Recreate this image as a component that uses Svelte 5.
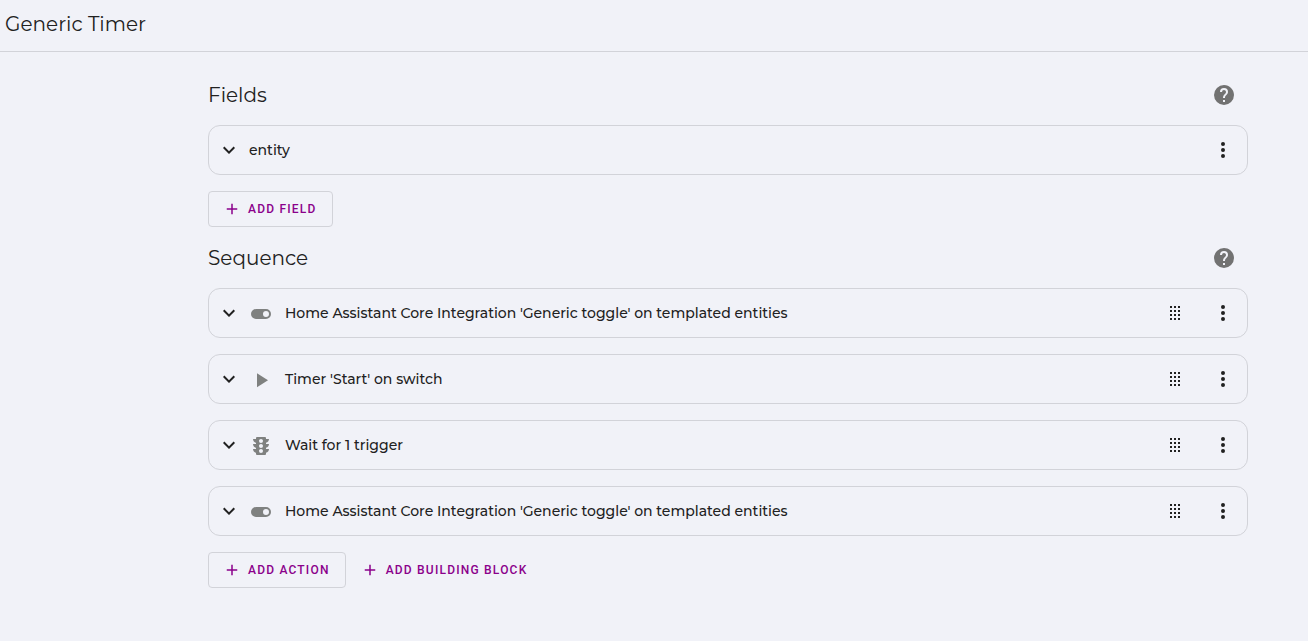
<script lang="ts">
  type Action = { id: number; icon: string; label: string };

  const icons: Record<string, string> = {
    chevron: 'M7.41,8.58L12,13.17L16.59,8.58L18,10L12,16L6,10L7.41,8.58Z',
    dots: 'M12,16A2,2 0 0,1 14,18A2,2 0 0,1 12,20A2,2 0 0,1 10,18A2,2 0 0,1 12,16M12,10A2,2 0 0,1 14,12A2,2 0 0,1 12,14A2,2 0 0,1 10,12A2,2 0 0,1 12,10M12,4A2,2 0 0,1 14,6A2,2 0 0,1 12,8A2,2 0 0,1 10,6A2,2 0 0,1 12,4Z',
    drag: 'M7,19V17H9V19H7M11,19V17H13V19H11M15,19V17H17V19H15M7,15V13H9V15H7M11,15V13H13V15H11M15,15V13H17V15H15M7,11V9H9V11H7M11,11V9H13V11H11M15,11V9H17V11H15M7,7V5H9V7H7M11,7V5H13V7H11M15,7V5H17V7H15Z',
    plus: 'M19,13H13V19H11V13H5V11H11V5H13V11H19V13Z',
    help: 'M15.07,11.25L14.17,12.17C13.45,12.89 13,13.5 13,15H11V14.5C11,13.39 11.45,12.39 12.17,11.67L13.41,10.41C13.78,10.05 14,9.55 14,9C14,7.89 13.1,7 12,7A2,2 0 0,0 10,9H8A4,4 0 0,1 12,5A4,4 0 0,1 16,9C16,9.88 15.64,10.67 15.07,11.25M13,19H11V17H13M12,2A10,10 0 0,0 2,12A10,10 0 0,0 12,22A10,10 0 0,0 22,12C22,6.47 17.5,2 12,2Z',
    toggle: 'M17,7H7A5,5 0 0,0 2,12A5,5 0 0,0 7,17H17A5,5 0 0,0 22,12A5,5 0 0,0 17,7M17,15A3,3 0 0,1 14,12A3,3 0 0,1 17,9A3,3 0 0,1 20,12A3,3 0 0,1 17,15Z',
    play: 'M8,5.14V19.14L19,12.14L8,5.14Z',
    traffic: 'M12,9A2,2 0 0,1 10,7C10,5.89 10.9,5 12,5C13.11,5 14,5.89 14,7A2,2 0 0,1 12,9M12,14A2,2 0 0,1 10,12C10,10.89 10.9,10 12,10C13.11,10 14,10.89 14,12A2,2 0 0,1 12,14M12,19A2,2 0 0,1 10,17C10,15.89 10.9,15 12,15C13.11,15 14,15.89 14,17A2,2 0 0,1 12,19M20,10H17V8.86C18.72,8.41 20,6.86 20,5H17V4A1,1 0 0,0 16,3H8A1,1 0 0,0 7,4V5H4C4,6.86 5.28,8.41 7,8.86V10H4C4,11.86 5.28,13.41 7,13.86V15H4C4,16.86 5.28,18.41 7,18.86V20A1,1 0 0,0 8,21H16A1,1 0 0,0 17,20V18.86C18.72,18.41 20,16.86 20,15H17V13.86C18.72,13.41 20,11.86 20,10Z',
  };

  const fields = ['entity'];

  const actions: Action[] = [
    { id: 1, icon: 'toggle', label: "Home Assistant Core Integration 'Generic toggle' on templated entities" },
    { id: 2, icon: 'play', label: "Timer 'Start' on switch" },
    { id: 3, icon: 'traffic', label: 'Wait for 1 trigger' },
    { id: 4, icon: 'toggle', label: "Home Assistant Core Integration 'Generic toggle' on templated entities" },
  ];
</script>

{#snippet icon(name: string)}
  <svg viewBox="0 0 24 24" aria-hidden="true"><path d={icons[name]} /></svg>
{/snippet}

{#snippet heading(title: string)}
  <div class="section-header">
    <h2>{title}</h2>
    <button class="icon-btn help" aria-label="Help for {title}">{@render icon('help')}</button>
  </div>
{/snippet}

<header>
  <h1>Generic Timer</h1>
</header>

<main>
  <section>
    {@render heading('Fields')}
    <div class="list">
      {#each fields as field}
        <div class="card">
          <button class="summary">
            {@render icon('chevron')}
            <span class="label">{field}</span>
          </button>
          <button class="icon-btn" aria-label="Field menu">{@render icon('dots')}</button>
        </div>
      {/each}
    </div>
    <div class="buttons">
      <button class="add outlined">{@render icon('plus')}Add field</button>
    </div>
  </section>

  <section>
    {@render heading('Sequence')}
    <div class="list">
      {#each actions as action (action.id)}
        <div class="card">
          <button class="summary">
            {@render icon('chevron')}
            <span class="kind">{@render icon(action.icon)}</span>
            <span class="label">{action.label}</span>
          </button>
          <button class="icon-btn" aria-label="Move action">{@render icon('drag')}</button>
          <button class="icon-btn" aria-label="Action menu">{@render icon('dots')}</button>
        </div>
      {/each}
    </div>
    <div class="buttons">
      <button class="add outlined">{@render icon('plus')}Add action</button>
      <button class="add">{@render icon('plus')}Add building block</button>
    </div>
  </section>
</main>

<style>
  :global(body) {
    background: #f1f2f8;
    color: #212121;
    font-family: Montserrat, Inter, sans-serif;
  }
  h1, h2 { margin: 0; font-size: 20px; line-height: 24px; font-weight: 400; }
  header { padding: 12px 5px 15px; border-bottom: 1px solid #d2d3d9; }
  main { padding: 12px 60px 40px 208px; }

  svg { display: block; flex: none; width: 24px; height: 24px; fill: currentColor; }
  button {
    margin: 0; padding: 0; border: none; background: none;
    color: inherit; font: inherit; cursor: pointer;
  }

  .section-header {
    display: flex; align-items: center; justify-content: space-between;
    padding: 7px 0 6px;
  }
  .icon-btn {
    display: flex; align-items: center; justify-content: center;
    flex: none; width: 48px; height: 48px;
  }
  .help { color: #727272; }

  .list { display: flex; flex-direction: column; gap: 16px; }
  .card {
    display: flex; align-items: center;
    border: 1px solid #d2d3d9; border-radius: 12px;
  }
  .summary {
    display: flex; align-items: center; flex: 1; min-width: 0;
    min-height: 48px; padding: 0 8px; gap: 8px; text-align: left;
  }
  .kind { padding-top: 2px; color: #7f8180; }
  .label { font-size: 14px; line-height: 20px; font-weight: 500; }
  .kind + .label { padding-left: 4px; }

  .buttons { display: flex; flex-wrap: wrap; padding-top: 16px; }
  .add {
    display: flex; align-items: center; gap: 7px;
    height: 36px; padding: 0 15px 0 14px;
    border: 1px solid transparent; border-radius: 4px;
    color: #8b008b; font-family: Roboto, sans-serif; font-size: 12px;
    font-weight: 500; letter-spacing: 0.1em; text-transform: uppercase;
  }
  .add svg { width: 18px; height: 18px; }
  .outlined { border-color: #d2d3d9; }
</style>
